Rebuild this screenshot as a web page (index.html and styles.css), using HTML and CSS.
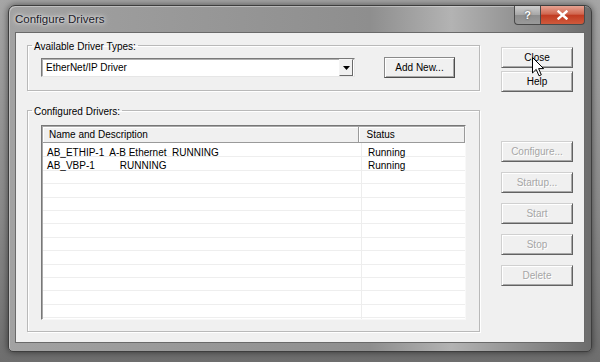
FILE: index.html
```html
<!DOCTYPE html>
<html>
<head>
<meta charset="utf-8">
<title>Configure Drivers</title>
<link rel="stylesheet" href="styles.css">
</head>
<body>
<div class="window">
  <div class="titlebar">
    <span class="title">Configure Drivers</span>
    <div class="caption-btns">
      <span class="cbtn cb-help">?</span>
      <span class="cbtn cb-close"><svg width="11" height="10" viewBox="0 0 11 10"><path d="M1.5 1.5 L9.5 8.5 M9.5 1.5 L1.5 8.5" stroke="#ffffff" stroke-width="2.4" stroke-linecap="square"/></svg></span>
    </div>
  </div>
  <div class="client">
    <div class="main">
      <fieldset class="group group-types">
        <legend>Available Driver Types:</legend>
        <div class="types-row">
          <div class="combo">
            <span class="combo-text">EtherNet/IP Driver</span>
            <span class="combo-drop"><svg width="7" height="4" viewBox="0 0 7 4"><path d="M0 0 H7 L3.5 4 Z" fill="#000"/></svg></span>
          </div>
          <button class="btn btn-add">Add New...</button>
        </div>
      </fieldset>
      <fieldset class="group group-drivers">
        <legend>Configured Drivers:</legend>
        <div class="list">
          <div class="list-head">
            <div class="hcell hcell-name">Name and Description</div>
            <div class="hcell hcell-status">Status</div>
          </div>
          <div class="list-body">
            <div class="lrow"><span class="cell cell-name">AB_ETHIP-1  A-B Ethernet  RUNNING</span><span class="cell cell-status">Running</span></div>
            <div class="lrow"><span class="cell cell-name">AB_VBP-1         RUNNING</span><span class="cell cell-status">Running</span></div>
          </div>
        </div>
      </fieldset>
    </div>
    <div class="side">
      <button class="btn">Close</button>
      <button class="btn btn-help">Help</button>
      <button class="btn btn-configure" disabled>Configure...</button>
      <button class="btn" disabled>Startup...</button>
      <button class="btn" disabled>Start</button>
      <button class="btn" disabled>Stop</button>
      <button class="btn" disabled>Delete</button>
    </div>
  </div>
  <svg class="cursor" width="13" height="20" viewBox="0 0 13 20"><path d="M0.5 0.5 L0.5 16 L4.2 12.4 L7 18.8 L9.3 17.8 L6.6 11.6 L11.6 11.6 Z" fill="#ffffff" stroke="#000000" stroke-width="1" stroke-linejoin="round"/></svg>
</div>
</body>
</html>
```

FILE: styles.css
```css
html, body {
  margin: 0;
  padding: 0;
}
body {
  width: 600px;
  height: 362px;
  overflow: hidden;
  background: linear-gradient(to bottom, #a6a6a6, #8a8a8a 60%, #6e6e6e);
  font-family: "Liberation Sans", Arial, sans-serif;
  font-size: 10px;
  color: #000;
}
.window {
  position: relative;
  box-sizing: border-box;
  margin: 5px 0 0 8px;
  width: 584px;
  height: 347px;
  border: 1px solid #3e3e3e;
  border-radius: 7px 7px 5px 5px;
  background: linear-gradient(to right, #a2a2a2 0%, #959595 40%, #8e8e8e 62%, #b3b3b3 76%, #8a8a8a 90%, #6c6c6c 100%);
  box-shadow: 0 0 7px rgba(0,0,0,0.55), inset 1px 1px 0 rgba(255,255,255,0.35);
}
.titlebar {
  height: 26px;
  display: flex;
  justify-content: space-between;
  align-items: flex-start;
  padding: 0 6px;
}
.title {
  margin-top: 7px;
  font-size: 11.5px;
  color: #1c1c2a;
  text-shadow: 0 0 6px #ffffff, 0 0 3px rgba(255,255,255,0.8);
}
.caption-btns {
  display: flex;
  height: 19px;
}
.cbtn {
  box-sizing: border-box;
  height: 19px;
  display: flex;
  align-items: center;
  justify-content: center;
  border: 1px solid #4a4a4a;
  border-top: none;
}
.cb-help {
  width: 26px;
  border-radius: 0 0 0 4px;
  border-right: none;
  background: linear-gradient(to bottom, #cfcfcf, #a6a6a6 50%, #8d8d8d 51%, #9a9a9a);
  color: #ffffff;
  font-weight: bold;
  font-size: 11px;
  text-shadow: 0 0 2px #333;
}
.cb-close {
  width: 45px;
  border-radius: 0 0 4px 0;
  background: linear-gradient(to bottom, #e6a393, #d0664f 45%, #c13b22 52%, #cf5a3c);
}
.client {
  box-sizing: border-box;
  margin: 0 6px;
  height: 311px;
  border: 1px solid #6a6a6a;
  background: #f0f0f0;
  display: flex;
}
.main {
  padding: 4px 0 0 11px;
  width: 453px;
}
.group {
  margin: 0;
  padding: 0;
  min-width: 0;
  border: 1px solid #b9b9b9;
  box-shadow: 1px 1px 0 #ffffff, inset 1px 1px 0 #ffffff;
}
.group legend {
  margin-left: 4px;
  padding: 4px 2px 0;
  line-height: 12px;
  font-size: 10px;
}
.types-row {
  display: flex;
  align-items: center;
  margin: 4px 0 12px 13px;
  height: 21px;
}
.combo {
  box-sizing: border-box;
  width: 314px;
  height: 19px;
  display: flex;
  align-items: center;
  justify-content: space-between;
  background: #ffffff;
  border: 1px solid;
  border-color: #7a7a7a #e6e6e6 #e6e6e6 #7a7a7a;
  box-shadow: inset 1px 1px 0 #b0b0b0;
}
.combo-text {
  padding-left: 4px;
}
.combo-drop {
  box-sizing: border-box;
  width: 14px;
  height: 17px;
  margin-right: 1px;
  display: flex;
  align-items: center;
  justify-content: center;
  background: #f0f0f0;
  border: 1px solid;
  border-color: #f4f4f4 #6a6a6a #6a6a6a #f4f4f4;
}
.btn {
  box-sizing: border-box;
  width: 72px;
  height: 21px;
  padding: 0;
  margin: 0;
  font-family: "Liberation Sans", Arial, sans-serif;
  font-size: 10px;
  color: #000;
  background: #f0f0f0;
  border: 1px solid;
  border-color: #d0d0d0 #626262 #626262 #d0d0d0;
  box-shadow: inset 1px 1px 0 #ffffff, inset -1px -1px 0 #a8a8a8;
}
.btn:disabled {
  color: #a6a6a6;
  text-shadow: 1px 1px 0 #ffffff;
}
.btn-add {
  width: 71px;
  margin-left: 29px;
  border-color: #8a8a8a #4e4e4e #4e4e4e #8a8a8a;
}
.group-drivers {
  margin-top: 11px;
}
.list {
  box-sizing: border-box;
  margin: 7px 0 11px 13px;
  width: 425px;
  height: 195px;
  border: 1px solid;
  border-color: #777777 #f8f8f8 #f8f8f8 #777777;
  box-shadow: inset 1px 1px 0 #a8a8a8;
  background: #ffffff;
  display: flex;
  flex-direction: column;
  padding: 1px 0 0 1px;
}
.list-head {
  display: flex;
  height: 16px;
  background: #f0f0f0;
  border-bottom: 1px solid #9a9a9a;
  box-sizing: border-box;
}
.hcell {
  box-sizing: border-box;
  line-height: 16px;
  padding-left: 6px;
  border-right: 1px solid #9a9a9a;
  box-shadow: inset 1px 1px 0 #ffffff;
}
.hcell-name {
  width: 318px;
}
.hcell-status {
  width: 106px;
  padding-left: 7px;
}
.list-body {
  flex: 1;
  padding-top: 1px;
  background:
    linear-gradient(to right, transparent 318px, #ededed 318px, #ededed 319px, transparent 319px),
    repeating-linear-gradient(to bottom, transparent 0, transparent 12.4px, #eeeeee 12.4px, #eeeeee 13.4px);
  background-position: 0 1px;
}
.lrow {
  display: flex;
  height: 13.4px;
  line-height: 13px;
  padding-top: 2px;
  margin-bottom: -2px;
}
.cell {
  white-space: pre;
}
.cell-name {
  width: 318px;
  padding-left: 4px;
  box-sizing: border-box;
}
.cell-status {
  padding-left: 7px;
}
.side {
  display: flex;
  flex-direction: column;
  gap: 10px;
  padding: 14px 0 0 21px;
}
.side .btn-help {
  margin-top: -7px;
}
.side .btn-configure {
  margin-top: 39px;
}
.cursor {
  position: absolute;
  left: 523px;
  top: 51px;
}
```
